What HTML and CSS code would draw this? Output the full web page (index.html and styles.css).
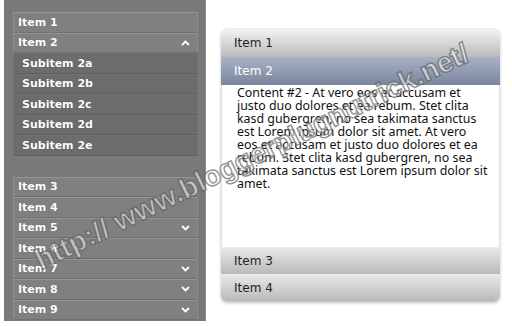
FILE: index.html
```html
<!DOCTYPE html>
<html lang="en">
<head>
    <meta charset="UTF-8">
    <title>Accordion Menu</title>
    <link rel="stylesheet" href="styles.css">
</head>
<body>

  <div class="side">
    <ul class="menu">
      <li class="item">Item 1</li>
      <li class="item">Item 2
        <svg class="chev" width="9" height="6" viewBox="0 0 9 6"><polyline points="1,5 4.5,1.5 8,5" /></svg>
      </li>
      <li>
        <ul class="sub">
          <li class="item">Subitem 2a</li>
          <li class="item">Subitem 2b</li>
          <li class="item">Subitem 2c</li>
          <li class="item">Subitem 2d</li>
          <li class="item">Subitem 2e</li>
        </ul>
      </li>
    </ul>

    <ul class="menu second">
      <li class="item">Item 3</li>
      <li class="item">Item 4</li>
      <li class="item">Item 5
        <svg class="chev" width="9" height="6" viewBox="0 0 9 6"><polyline points="1,1 4.5,4.5 8,1" /></svg>
      </li>
      <li class="item">Item 6</li>
      <li class="item">Item 7
        <svg class="chev" width="9" height="6" viewBox="0 0 9 6"><polyline points="1,1 4.5,4.5 8,1" /></svg>
      </li>
      <li class="item">Item 8
        <svg class="chev" width="9" height="6" viewBox="0 0 9 6"><polyline points="1,1 4.5,4.5 8,1" /></svg>
      </li>
      <li class="item">Item 9
        <svg class="chev" width="9" height="6" viewBox="0 0 9 6"><polyline points="1,1 4.5,4.5 8,1" /></svg>
      </li>
    </ul>
  </div>

  <div class="acc">
    <div class="head first">Item 1</div>
    <div class="head open">Item 2</div>
    <div class="content">
      Content #2 - At vero eos et accusam et justo duo dolores et ea rebum. Stet clita kasd gubergren, no sea takimata sanctus est Lorem ipsum dolor sit amet. At vero eos et accusam et justo duo dolores et ea rebum. Stet clita kasd gubergren, no sea takimata sanctus est Lorem ipsum dolor sit amet.
    </div>
    <div class="head">Item 3</div>
    <div class="head last">Item 4</div>
  </div>

  <div class="watermark">http:// www.bloggerplugnutrick.net/</div>

</body>
</html>
```

FILE: styles.css
```css
/* Estilo geral */
body {
    margin: 0;
    background-color: #fff;
    display: flex;
    align-items: flex-start;
    position: relative;
    height: 326px;
    overflow: hidden;
}

/* Menu lateral */
.side {
    width: 202px;
    height: 321px;
    margin-left: 4px;
    padding: 12px 7px 0 9px;
    box-sizing: border-box;
    background-color: #797979;
    border-right: 1px solid #8c8c8c;
}

.menu, .sub {
    list-style: none;
    margin: 0;
    padding: 0;
}

.menu.second {
    margin-top: 21px;
}

.item {
    height: 20.5px;
    box-sizing: border-box;
    display: flex;
    align-items: center;
    justify-content: space-between;
    padding: 0 7px 0 4px;
    background-color: #808080;
    border: 1px solid #8e8e8e;
    border-top-color: #949494;
    border-bottom-color: #707070;
    color: #fff;
    font-family: "DejaVu Sans", Verdana, sans-serif;
    font-weight: bold;
    font-size: 11px;
    text-shadow: 0 0 1px rgba(0, 0, 0, 0.35);
}

.sub .item {
    padding-left: 8px;
    background-color: #6c6c6c;
    border-color: #727272;
    border-bottom-color: #5e5e5e;
}

.chev {
    fill: none;
    stroke: #fff;
    stroke-width: 1.8;
}

/* Accordion da direita */
.acc {
    width: 279px;
    margin: 28px 0 0 15px;
    border-radius: 6px;
    overflow: hidden;
    box-shadow: 0 2px 3px rgba(0, 0, 0, 0.25);
    font-family: "DejaVu Sans", Verdana, sans-serif;
}

.head {
    height: 26px;
    display: flex;
    align-items: center;
    padding-left: 13px;
    font-size: 12px;
    color: #222;
    background: linear-gradient(#e8e8e8, #b9b9b9);
    border-top: 1px solid #ececec;
}

.head.first {
    height: 27px;
    background: linear-gradient(#f3f3f3, #bcbcbc);
}

.head.open {
    height: 28px;
    color: #fff;
    border-top-color: #b3bacb;
    background: linear-gradient(#a9b1c5, #7a869e);
}

.head.last {
    height: 26px;
}

.content {
    height: 162px;
    box-sizing: border-box;
    padding: 1px 10px 0 15px;
    background-color: #fff;
    border-left: 1px solid #e2e2e2;
    border-right: 1px solid #e2e2e2;
    font-family: "Noto Sans", "DejaVu Sans", sans-serif;
    font-size: 12.4px;
    line-height: 13px;
    color: #111;
}

/* Marca d'agua */
.watermark {
    position: absolute;
    left: 12px;
    top: 140px;
    width: 480px;
    text-align: center;
    transform: rotate(-26deg);
    font-family: "Liberation Sans", Arial, sans-serif;
    font-weight: bold;
    font-size: 28.5px;
    color: rgba(255, 255, 255, 0.55);
    -webkit-text-stroke: 1.5px rgba(80, 80, 80, 0.6);
    white-space: nowrap;
    pointer-events: none;
}
```
